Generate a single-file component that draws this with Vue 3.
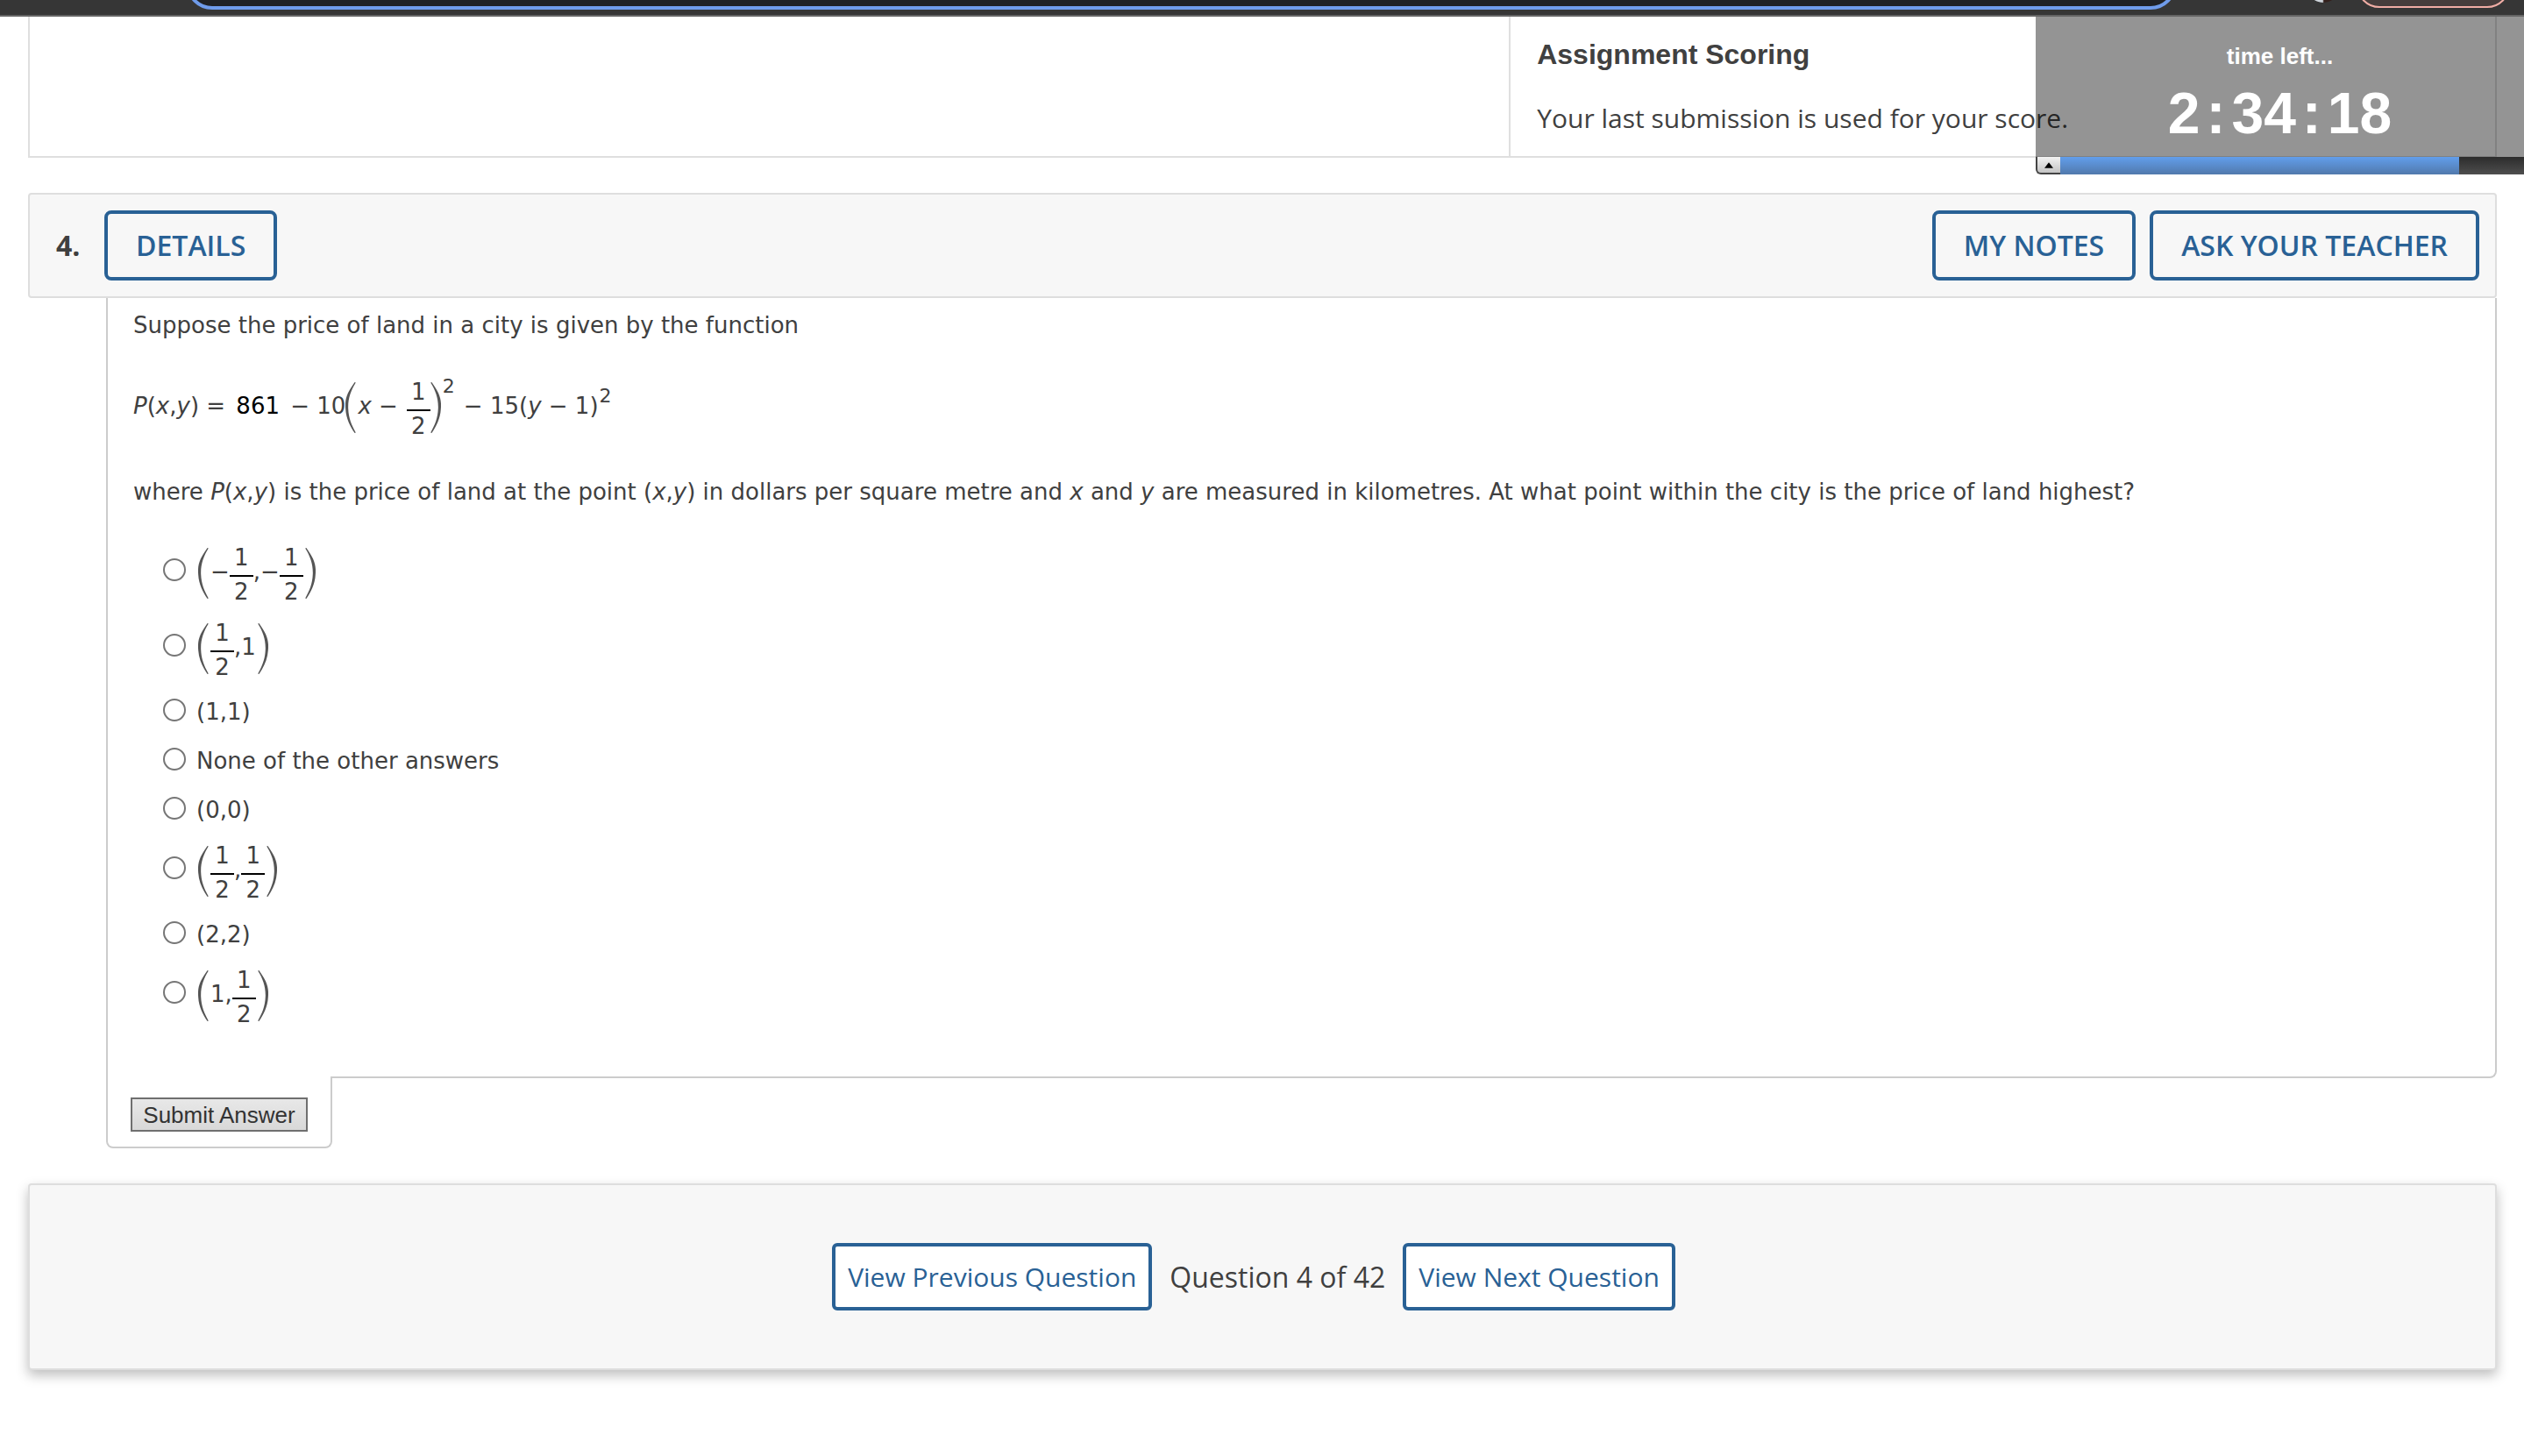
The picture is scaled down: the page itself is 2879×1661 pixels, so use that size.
<script setup>
import { ref, h } from 'vue'

const Frac = () => h('span', { class: 'frac' }, [
  h('span', { class: 'num' }, '1'),
  h('span', { class: 'den' }, '2'),
])

const Paren = (props) => h('svg', { class: ['paren', props.side], viewBox: '0 0 12 58', 'aria-hidden': 'true' }, [
  h('path', {
    d: props.side === 'left'
      ? 'M10.6 0 C2 12 -1 19 .2 31 C.8 41 5 50 10.6 58 L11.8 57.4 C7 49 3.6 41 3.2 30 C2.8 19 6 10 11.8 .6 Z'
      : 'M1.4 0 C10 12 13 19 11.8 31 C11.2 41 7 50 1.4 58 L.2 57.4 C5 49 8.4 41 8.8 30 C9.2 19 6 10 .2 .6 Z',
  }),
])
Paren.props = ['side']

const answer = ref(null)
const timeUsed = ref(86)

// 'F' stands for one half; other entries are plain text
const options = [
  { id: 'a', tall: true, parts: ['−', 'F', ',', '−', 'F'] },
  { id: 'b', tall: true, parts: ['F', ',', '1'] },
  { id: 'c', text: '(1,1)' },
  { id: 'd', text: 'None of the other answers' },
  { id: 'e', text: '(0,0)' },
  { id: 'f', tall: true, parts: ['F', ',', 'F'] },
  { id: 'g', text: '(2,2)' },
  { id: 'h', tall: true, parts: ['1', ',', 'F'] },
]
</script>

<template>
  <div class="page">
    <div class="browser-bar">
      <div class="address"></div>
      <div class="avatar"></div>
      <div class="update"></div>
    </div>

    <aside class="timer">
      <div class="timer-face">
        <div class="timer-label">time left...</div>
        <div class="timer-value">2<span class="colon">:</span>34<span class="colon">:</span>18</div>
      </div>
      <div class="timer-track">
        <button class="timer-toggle" type="button" aria-label="Collapse timer">
          <svg viewBox="0 0 12 8" aria-hidden="true"><path d="M6 0 L12 8 H0 Z" /></svg>
        </button>
        <div class="track"><div class="track-fill" :style="{ width: timeUsed + '%' }"></div></div>
      </div>
    </aside>

    <main class="content">
      <section class="assignment">
        <div class="assignment-main"></div>
        <div class="scoring">
          <h2>Assignment Scoring</h2>
          <p>Your last submission is used for your score.</p>
        </div>
      </section>

      <header class="question-bar">
        <span class="number">4.</span>
        <button class="outline" type="button">DETAILS</button>
        <span class="spacer"></span>
        <button class="outline" type="button">MY NOTES</button>
        <button class="outline" type="button">ASK YOUR TEACHER</button>
      </header>

      <form class="question" @submit.prevent>
        <div class="question-body">
          <p class="text">Suppose the price of land in a city is given by the function</p>
          <div class="formula">
            <span><i>P</i>(<i>x</i>,<i>y</i>) = <span class="value">861</span> − 10</span>
            <Paren side="left" />
            <span class="term"><i>x</i> −</span>
            <Frac />
            <Paren side="right" />
            <span class="power high">2</span>
            <span class="tail">− 15(<i>y</i> − 1)</span>
            <span class="power">2</span>
          </div>
          <p class="text">where <i>P</i>(<i>x</i>,<i>y</i>) is the price of land at the point (<i>x</i>,<i>y</i>) in dollars per square metre and <i>x</i> and <i>y</i> are measured in kilometres. At what point within the city is the price of land highest?</p>

          <div class="options">
            <label v-for="o in options" :key="o.id" class="option" :class="{ tall: o.tall }">
              <input v-model="answer" type="radio" name="answer" :value="o.id" />
              <span v-if="o.text">{{ o.text }}</span>
              <span v-else class="math">
                <Paren side="left" />
                <template v-for="(p, i) in o.parts" :key="i">
                  <Frac v-if="p === 'F'" />
                  <span v-else>{{ p }}</span>
                </template>
                <Paren side="right" />
              </span>
            </label>
          </div>
        </div>
        <div class="submit-tab">
          <button class="submit" type="submit">Submit Answer</button>
        </div>
      </form>

      <nav class="pager">
        <button class="page-button" type="button">View Previous Question</button>
        <span class="position">Question 4 of 42</span>
        <button class="page-button" type="button">View Next Question</button>
      </nav>
    </main>
  </div>
</template>

<style>
body {
  margin: 0;
  background: #fff;
}
.frac {
  display: inline-flex;
  flex-direction: column;
  width: 27px;
  margin-top: 7px;
  text-align: center;
  line-height: 34px;
}
.frac .num {
  padding-bottom: 3px;
  border-bottom: 2px solid #000;
}
.paren {
  flex: none;
  width: 12px;
  height: 58px;
  margin-top: 4px;
  fill: #555;
}
</style>

<style scoped>
.page {
  position: relative;
  min-height: 100vh;
  color: #404040;
  font-family: "Open Sans", sans-serif;
}
button {
  font-family: inherit;
  cursor: pointer;
}
.browser-bar {
  display: flex;
  box-sizing: border-box;
  height: 19px;
  overflow: hidden;
  padding: 0 16px 0 212px;
  background: #363636;
  border-bottom: 2px solid #646464;
}
.address {
  flex: 1;
  box-sizing: border-box;
  height: 60px;
  margin-top: -49px;
  background: #202124;
  border: 4px solid #6f9bea;
  border-radius: 30px;
}
.avatar {
  width: 38px;
  height: 38px;
  margin: -35px 19px 0 148px;
  border-radius: 50%;
  background: linear-gradient(90deg, #cdd3da 48%, #33201c 52%);
}
.update {
  box-sizing: border-box;
  width: 175px;
  height: 52px;
  margin-top: -43px;
  background: #463d3c;
  border: 2px solid #f0ada5;
  border-radius: 26px;
}
.timer {
  position: absolute;
  top: 19px;
  right: 0;
  width: 557px;
}
.timer-face {
  display: flex;
  flex-direction: column;
  align-items: center;
  height: 160px;
  background: rgba(0, 0, 0, 0.42);
  color: #fff;
  font-family: "Liberation Sans", Arial, sans-serif;
  font-weight: bold;
}
.timer-label {
  margin-top: 30px;
  font-size: 26px;
  line-height: 30px;
}
.timer-value {
  margin-top: 14px;
  font-size: 66px;
  line-height: 72px;
}
.colon {
  padding: 0 7px;
}
.timer-track {
  display: flex;
  height: 20px;
}
.timer-toggle {
  display: flex;
  align-items: center;
  justify-content: center;
  box-sizing: border-box;
  width: 28px;
  padding: 0;
  background: linear-gradient(#f2f2f2, #c4c4c4);
  border: 0 solid #444;
  border-width: 0 0 2px 2px;
  border-bottom-left-radius: 6px;
}
.timer-toggle svg {
  width: 10px;
  height: 7px;
}
.track {
  flex: 1;
  background: linear-gradient(#2c2c2c, #4e4e4e);
}
.track-fill {
  height: 100%;
  background: linear-gradient(#629eeb, #5179ac);
}
.content {
  padding: 0 31px 40px 32px;
}
.assignment {
  display: flex;
  border: 2px solid #dfdfdf;
  border-top: 0;
}
.assignment-main {
  width: 60%;
}
.scoring {
  box-sizing: border-box;
  width: 40%;
  padding: 23px 30px 22px;
  border-left: 2px solid #dfdfdf;
}
.scoring h2 {
  margin: 0;
  font: bold 32px/40px "Liberation Sans", Arial, sans-serif;
}
.scoring p {
  margin: 32px 0 0;
  font-size: 30px;
  line-height: 42px;
}
.question-bar {
  display: flex;
  align-items: center;
  gap: 16px;
  margin-top: 40px;
  padding: 18px 18px 18px 30px;
  background: #f7f7f7;
  border: 2px solid #dedede;
  border-radius: 4px;
}
.number {
  width: 39px;
  padding-bottom: 2px;
  font-size: 32px;
  font-weight: bold;
}
.outline {
  height: 80px;
  padding: 0 32px 2px;
  background: transparent;
  border: 4px solid #296195;
  border-radius: 8px;
  color: #296195;
  font-size: 32px;
  font-weight: 600;
}
.spacer {
  flex: 1;
}
.question {
  margin-left: 89px;
  font-family: "DejaVu Sans", Verdana, sans-serif;
  font-size: 26px;
}
.question-body {
  padding: 11px 29px 48px;
  border: 2px solid #ccc;
  border-top: 0;
  border-bottom-right-radius: 8px;
}
.text {
  margin: 0;
  line-height: 40px;
}
.formula {
  display: flex;
  align-items: center;
  height: 80px;
  margin: 32px 0 38px;
}
.formula .value {
  padding: 0 4px;
  color: #000;
}
.term {
  margin: 0 10px 0 2px;
}
.power {
  margin: 0 0 22px 1px;
  font-size: 22px;
  line-height: 26px;
}
.power.high {
  margin: 0 10px 44px 2px;
}
.options {
  display: flex;
  flex-direction: column;
  padding: 31px 0 0 34px;
}
.option {
  display: flex;
  align-items: center;
  gap: 12px;
  height: 56px;
}
.option.tall {
  height: 80px;
  padding-bottom: 6px;
}
.option input {
  appearance: none;
  box-sizing: border-box;
  width: 26px;
  height: 26px;
  margin: 0 0 4px;
  background: #fff;
  border: 2px solid #767676;
  border-radius: 50%;
}
.math {
  display: flex;
  align-items: center;
  padding-left: 2px;
}
.math .paren {
  margin-right: 2px;
}
.math .paren.right {
  margin-left: 2px;
}
.submit-tab {
  position: relative;
  box-sizing: border-box;
  width: 258px;
  margin-top: -2px;
  padding: 24px 26px 17px;
  background: #fff;
  border: 2px solid #ccc;
  border-top: 0;
  border-radius: 0 0 8px 8px;
}
.submit {
  display: block;
  width: 100%;
  height: 39px;
  padding: 0;
  background: linear-gradient(#e8e8e8, #d8d8d8);
  border: 2px solid #6f6f6f;
  color: #333;
  font: 26px/30px "Liberation Sans", Arial, sans-serif;
}
.pager {
  display: flex;
  align-items: center;
  justify-content: center;
  gap: 20px;
  margin-top: 40px;
  padding: 66px 20px 66px 0;
  background: #f7f7f7;
  border: 2px solid #dedede;
  border-radius: 4px;
  box-shadow: 0 6px 14px rgba(0, 0, 0, 0.26);
}
.page-button {
  height: 77px;
  padding: 0 14px;
  background: #fff;
  border: 4px solid #296195;
  border-radius: 6px;
  color: #296195;
  font-size: 30px;
}
.position {
  font-size: 32px;
}
</style>
